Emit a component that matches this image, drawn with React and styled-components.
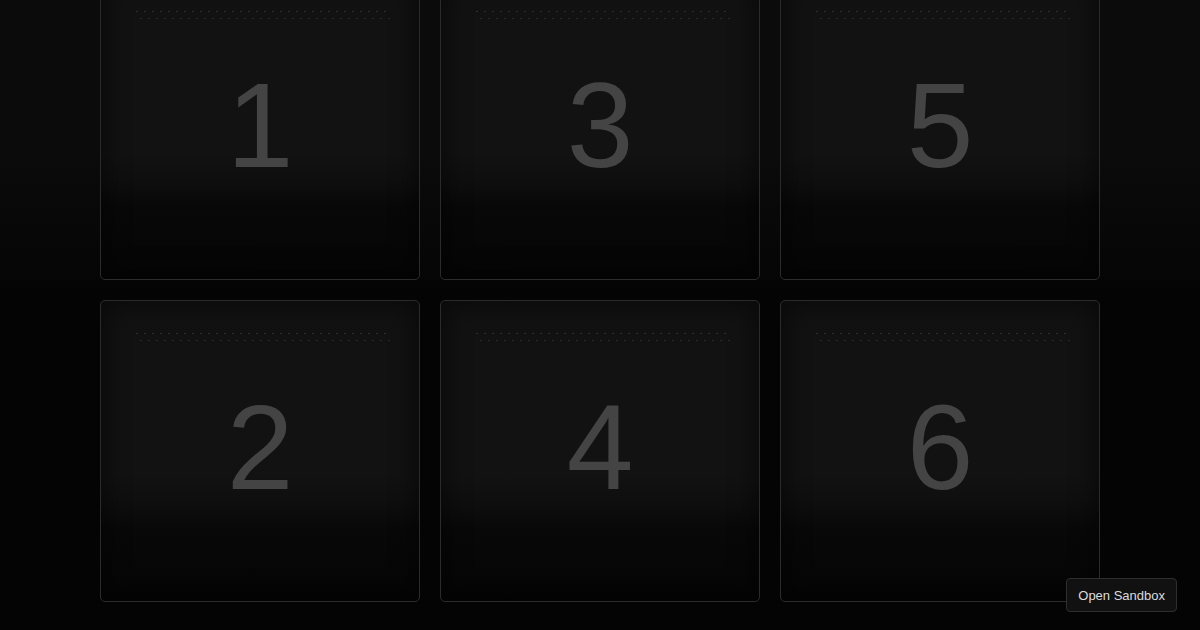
import React from "react"
import styled, { createGlobalStyle } from "styled-components"

const GlobalStyle = createGlobalStyle`
  html, body {
    margin: 0;
    padding: 0;
    height: 100%;
    background: #040404;
    overflow: hidden;
  }
  body {
    font-family: "Liberation Sans", Arial, sans-serif;
  }
`

const numbers = [1, 2, 3, 4, 5, 6]

export default function App() {
  return (
    <>
      <GlobalStyle />
      <Page>
        <Grid>
          {numbers.map(n => (
            <Card key={n}>
              <Dots />
              <Dots $offset />
              <Digit>{n}</Digit>
            </Card>
          ))}
        </Grid>
        <SandboxButton>Open Sandbox</SandboxButton>
      </Page>
    </>
  )
}

const Page = styled.div`
  position: relative;
  width: 1200px;
  height: 630px;
  overflow: hidden;
  background: linear-gradient(
    to bottom,
    #0b0b0b 0%,
    #0b0b0b 24%,
    #070707 38%,
    #040404 48%,
    #040404 100%
  );
  display: flex;
  justify-content: center;
`

const Grid = styled.div`
  margin-top: -22px;
  display: grid;
  grid-template-columns: repeat(3, 320px);
  grid-template-rows: repeat(2, 302px);
  grid-auto-flow: column;
  gap: 20px;
  align-content: start;
`

const Card = styled.div`
  position: relative;
  box-sizing: border-box;
  border: 1px solid #2b2b2b;
  border-radius: 5px;
  background: linear-gradient(
    to bottom,
    #121212 0%,
    #121212 58%,
    #0e0e0e 68%,
    #080808 76%,
    #050505 100%
  );
  box-shadow: inset 0 0 24px 6px rgba(0, 0, 0, 0.45);
  display: flex;
  flex-direction: column;
  align-items: center;
  padding-top: 32px;
`

const Dots = styled.div`
  width: 254px;
  height: 1px;
  margin-top: ${props => (props.$offset ? "6px" : "0")};
  margin-left: ${props => (props.$offset ? "8px" : "0")};
  background-image: radial-gradient(circle, #303030 0.6px, transparent 0.9px);
  background-size: ${props => (props.$offset ? "8px 1px" : "8px 1px")};
  opacity: ${props => (props.$offset ? "0.8" : "1")};
`

const Digit = styled.div`
  margin-top: 41px;
  font-family: "Liberation Sans", Arial, sans-serif;
  font-size: 120px;
  line-height: 130px;
  color: #444444;
`

const SandboxButton = styled.button`
  position: absolute;
  right: 23px;
  bottom: 18px;
  height: 34px;
  padding: 0 11px;
  border: 1px solid #2e2e2e;
  border-radius: 4px;
  background: #111111;
  color: #dcdcdc;
  font-family: "Liberation Sans", Arial, sans-serif;
  font-size: 13px;
  cursor: pointer;
`
